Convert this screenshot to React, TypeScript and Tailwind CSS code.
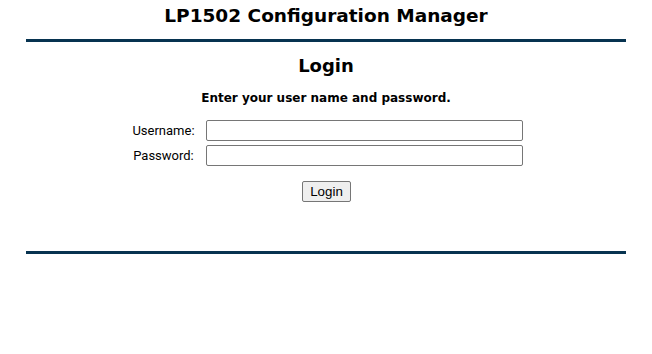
import React from "react";

export default function App() {
  return (
    <div className="w-[652px] h-[354px] bg-white">
      <div className="w-[600px] mx-auto">
        <div className="h-[39px] pt-[5px] text-center text-black font-bold text-[18.5px] leading-[22px] [font-family:'DejaVu_Sans',Verdana,sans-serif]">
          LP1502 Configuration Manager
        </div>
        <div className="h-[3px] bg-[#073350]" />
        <div className="pt-[12px] text-center text-black font-bold text-[18px] leading-[24px] [font-family:'DejaVu_Sans',Verdana,sans-serif]">
          Login
        </div>
        <div className="pt-[12px] text-center text-black font-bold text-[12px] leading-[16px] [font-family:'DejaVu_Sans',Verdana,sans-serif]">
          Enter your user name and password.
        </div>
        <div className="mt-[14px] flex flex-col items-center gap-[4px]">
          <div className="flex items-center">
            <label className="w-[77px] pr-[8px] text-center text-[13px] text-black [font-family:Roboto,sans-serif]">
              Username:
            </label>
            <input
              type="text"
              className="w-[317px] h-[21px] border border-[#767676] rounded-[2px] bg-white px-[2px] text-[13px] outline-none"
            />
          </div>
          <div className="flex items-center">
            <label className="w-[77px] pr-[8px] text-center text-[13px] text-black [font-family:Roboto,sans-serif]">
              Password:
            </label>
            <input
              type="password"
              className="w-[317px] h-[21px] border border-[#767676] rounded-[2px] bg-white px-[2px] text-[13px] outline-none"
            />
          </div>
        </div>
        <div className="mt-[15px] flex justify-center pl-[1px]">
          <button className="h-[21px] px-[7px] border border-[#767676] rounded-[2px] bg-[#efefef] text-[13.33px] leading-[15px] text-black [font-family:'Liberation_Sans',Arial,sans-serif]">
            Login
          </button>
        </div>
        <div className="mt-[49px] h-[3px] bg-[#073350]" />
      </div>
    </div>
  );
}
